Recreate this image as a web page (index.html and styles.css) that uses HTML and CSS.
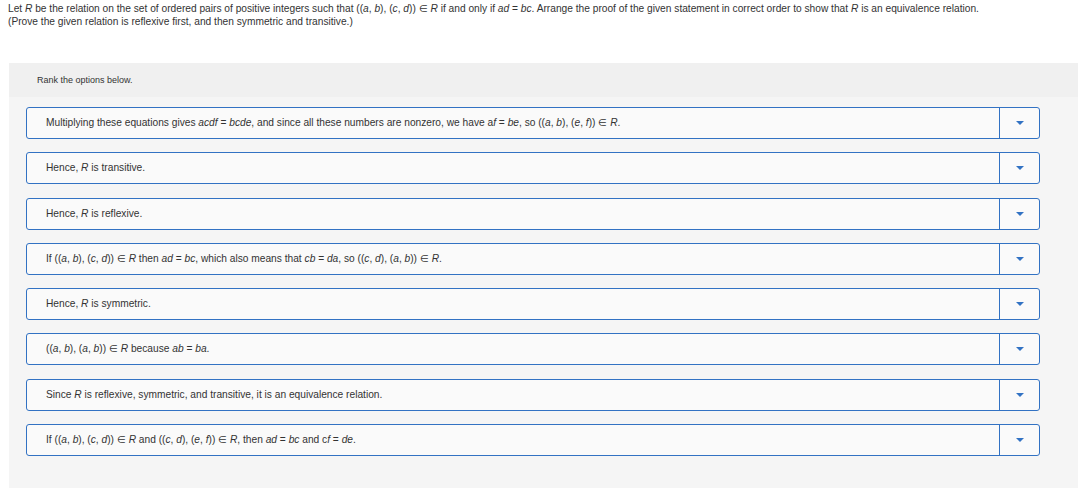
FILE: index.html
```html
<!DOCTYPE html>
<html lang="en">
<head>
    <meta charset="UTF-8">
    <title>Rank the options</title>
    <link rel="stylesheet" href="styles.css">
</head>
<body>
    <div class="prompt">
        <p>Let <i>R</i> be the relation on the set of ordered pairs of positive integers such that ((<i>a</i>, <i>b</i>), (<i>c</i>, <i>d</i>)) &isin; <i>R</i> if and only if <i>ad</i> = <i>bc</i>. Arrange the proof of the given statement in correct order to show that <i>R</i> is an equivalence relation.</p>
        <p>(Prove the given relation is reflexive first, and then symmetric and transitive.)</p>
    </div>

    <div class="ranking">
        <div class="ranking-head">Rank the options below.</div>
        <div class="ranking-body">
            <div class="option">
                <div class="option-text">Multiplying these equations gives <i>acdf</i> = <i>bcde</i>, and since all these numbers are nonzero, we have a<i>f</i> = <i>be</i>, so ((<i>a</i>, <i>b</i>), (<i>e</i>, <i>f</i>)) &isin; <i>R</i>.</div>
                <div class="option-select"><span class="caret"></span></div>
            </div>
            <div class="option">
                <div class="option-text">Hence, <i>R</i> is transitive.</div>
                <div class="option-select"><span class="caret"></span></div>
            </div>
            <div class="option">
                <div class="option-text">Hence, <i>R</i> is reflexive.</div>
                <div class="option-select"><span class="caret"></span></div>
            </div>
            <div class="option">
                <div class="option-text">If ((<i>a</i>, <i>b</i>), (<i>c</i>, <i>d</i>)) &isin; <i>R</i> then <i>ad</i> = <i>bc</i>, which also means that <i>cb</i> = <i>da</i>, so ((<i>c</i>, <i>d</i>), (<i>a</i>, <i>b</i>)) &isin; <i>R</i>.</div>
                <div class="option-select"><span class="caret"></span></div>
            </div>
            <div class="option">
                <div class="option-text">Hence, <i>R</i> is symmetric.</div>
                <div class="option-select"><span class="caret"></span></div>
            </div>
            <div class="option">
                <div class="option-text">((<i>a</i>, <i>b</i>), (<i>a</i>, <i>b</i>)) &isin; <i>R</i> because <i>ab</i> = <i>ba</i>.</div>
                <div class="option-select"><span class="caret"></span></div>
            </div>
            <div class="option">
                <div class="option-text">Since <i>R</i> is reflexive, symmetric, and transitive, it is an equivalence relation.</div>
                <div class="option-select"><span class="caret"></span></div>
            </div>
            <div class="option">
                <div class="option-text">If ((<i>a</i>, <i>b</i>), (<i>c</i>, <i>d</i>)) &isin; <i>R</i> and ((<i>c</i>, <i>d</i>), (<i>e</i>, <i>f</i>)) &isin; <i>R</i>, then <i>ad</i> = <i>bc</i> and c<i>f</i> = <i>de</i>.</div>
                <div class="option-select"><span class="caret"></span></div>
            </div>
        </div>
    </div>
</body>
</html>
```

FILE: styles.css
```css
/* General */
body {
    margin: 0;
    background-color: #fff;
    color: #333;
    font-family: "Liberation Sans", Arial, sans-serif;
    overflow: hidden;
}

/* Question text */
.prompt {
    padding: 2px 8px 0 8px;
    font-size: 10.2px;
    line-height: 13px;
}

.prompt p {
    margin: 0;
}

/* Ranking panel */
.ranking {
    margin: 35px 6px 0 9px;
    background-color: #f5f5f5;
}

.ranking-head {
    height: 34px;
    line-height: 34px;
    padding-left: 28px;
    background-color: #f0f0f0;
    font-size: 9px;
}

.ranking-body {
    padding: 10px 38px 40px 17px;
    display: flex;
    flex-direction: column;
    gap: 13.3px;
}

/* Option rows */
.option {
    display: flex;
    height: 32px;
    box-sizing: border-box;
    border: 1.5px solid #3272c3;
    border-radius: 3px;
    background-color: #fafafa;
}

.option-text {
    flex: 1;
    padding-left: 19px;
    line-height: 29px;
    font-size: 10.2px;
    white-space: nowrap;
}

.option-select {
    width: 39px;
    border-left: 1.5px solid #3272c3;
    display: flex;
    align-items: center;
    justify-content: center;
}

.caret {
    width: 0;
    height: 0;
    border-left: 4.5px solid transparent;
    border-right: 4.5px solid transparent;
    border-top: 4px solid #3272c3;
}
```
